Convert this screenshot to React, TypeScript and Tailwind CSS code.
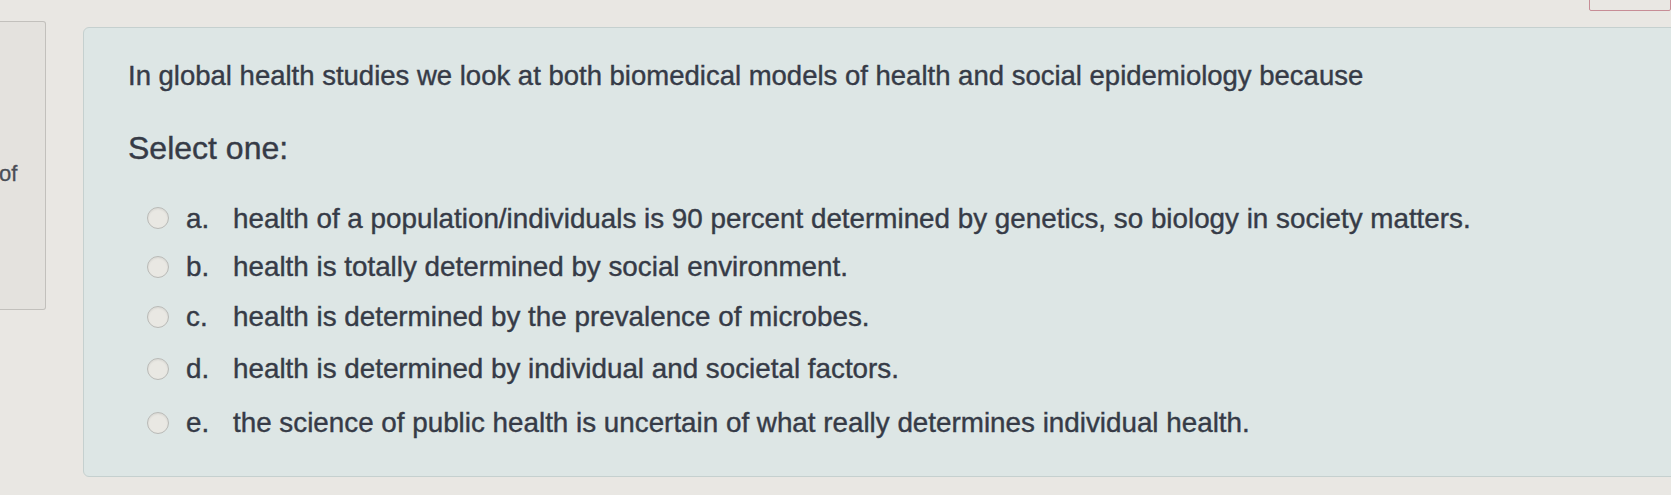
import React from "react";

const options = [
  { k: "a.", t: "health of a population/individuals is 90 percent determined by genetics, so biology in society matters.", h: "h-[48px]" },
  { k: "b.", t: "health is totally determined by social environment.", h: "h-[49px]" },
  { k: "c.", t: "health is determined by the prevalence of microbes.", h: "h-[51px]" },
  { k: "d.", t: "health is determined by individual and societal factors.", h: "h-[53px]" },
  { k: "e.", t: "the science of public health is uncertain of what really determines individual health.", h: "h-[55px]" },
];

export default function App() {
  return (
    <div
      className="w-[1671px] h-[495px] overflow-hidden bg-[#e9e7e3] relative"
      style={{ fontFamily: '"Liberation Sans", Arial, sans-serif' }}
    >
      <div className="absolute right-0 top-[-4px] w-[82px] h-[15px] border border-[#c78d96] rounded-[2px]" />
      <div className="flex items-start">
        <div className="mt-[21px] w-[46px] h-[289px] shrink-0 bg-[#e4e2de] border border-l-0 border-[#c2c0bc] rounded-r-[3px] pt-[138px]">
          <span className="block text-[22px] leading-[28px] text-[#4a4e56] -ml-[1px] [-webkit-text-stroke:0.3px_#4a4e56]">of</span>
        </div>
        <div className="mt-[27px] ml-[37px] w-[1600px] h-[450px] shrink-0 bg-[#dde6e5] border border-[#c5d0cf] rounded-[6px] pl-[44px] pt-[31px] text-[#363b47] [-webkit-text-stroke:0.4px_#363b47]">
          <div className="text-[27.5px] leading-[33px]">
            In global health studies we look at both biomedical models of health and social epidemiology because
          </div>
          <div className="mt-[37px] text-[32px] leading-[38px]">Select one:</div>
          <div className="mt-[27px] flex flex-col">
            {options.map((o) => (
              <div key={o.k} className={`${o.h} flex items-center pl-[19px]`}>
                <span className="w-[22px] h-[22px] rounded-full bg-[#e9e8e3] border-[1.5px] border-[#b9bab7] shrink-0 shadow-[inset_0_1px_2px_rgba(0,0,0,0.08)] [-webkit-text-stroke:0]" />
                <span className="ml-[17px] w-[47px] shrink-0 text-[27.8px] leading-[33px]">{o.k}</span>
                <span className="text-[27.8px] leading-[33px] whitespace-nowrap">{o.t}</span>
              </div>
            ))}
          </div>
        </div>
      </div>
    </div>
  );
}
